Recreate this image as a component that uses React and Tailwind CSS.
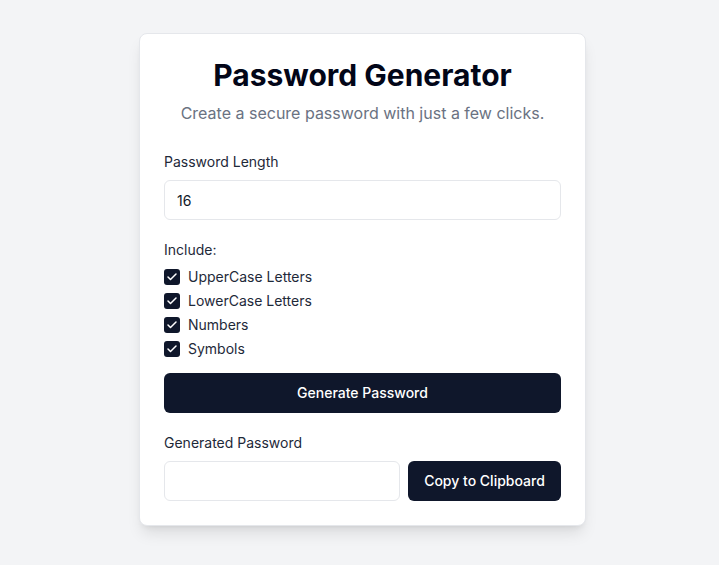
import { useState } from "react";

const opcoes = [
  { key: "upper", label: "UpperCase Letters" },
  { key: "lower", label: "LowerCase Letters" },
  { key: "numbers", label: "Numbers" },
  { key: "symbols", label: "Symbols" },
];

function Check({ checked, onChange, label }) {
  return (
    <label className="flex h-6 cursor-pointer select-none items-center gap-2 text-sm text-gray-800">
      <span
        onClick={onChange}
        className="flex h-4 w-4 items-center justify-center rounded-[3px] bg-slate-900"
      >
        {checked && (
          <svg viewBox="0 0 24 24" className="h-3 w-3" fill="none" stroke="white" strokeWidth="3" strokeLinecap="round" strokeLinejoin="round">
            <path d="M20 6 9 17l-5-5" />
          </svg>
        )}
      </span>
      {label}
    </label>
  );
}

export default function App() {
  const [tamanho, setTamanho] = useState("16");
  const [marcados, setMarcados] = useState({ upper: true, lower: true, numbers: true, symbols: true });
  const [senha, setSenha] = useState("");

  function gerar() {
    let chars = "";
    if (marcados.upper) chars += "ABCDEFGHIJKLMNOPQRSTUVWXYZ";
    if (marcados.lower) chars += "abcdefghijklmnopqrstuvwxyz";
    if (marcados.numbers) chars += "0123456789";
    if (marcados.symbols) chars += "!@#$%^&*()_+-=";
    if (!chars) return;
    let out = "";
    for (let i = 0; i < Number(tamanho); i++) out += chars[Math.floor(Math.random() * chars.length)];
    setSenha(out);
  }

  return (
    <div
      className="flex min-h-screen justify-center bg-gray-100 pl-[6px] pt-[33px]"
      style={{ fontFamily: "Inter, 'Noto Sans', sans-serif" }}
    >
      <div className="h-fit w-[447px] rounded-lg border border-gray-200 bg-white p-6 pt-[23px] shadow-lg">
        <h1 className="text-center text-3xl font-bold text-slate-950">Password Generator</h1>
        <p className="mt-2 text-center text-base text-gray-500">
          Create a secure password with just a few clicks.
        </p>

        <label className="mt-[27px] block text-sm text-gray-800">Password Length</label>
        <input
          value={tamanho}
          onChange={(e) => setTamanho(e.target.value)}
          className="mt-2 h-10 w-full rounded-md border border-gray-200 px-3 text-sm text-gray-900 outline-none"
        />

        <p className="mt-5 text-sm text-gray-800">Include:</p>
        <div className="mt-[5px] flex flex-col">
          {opcoes.map((o) => (
            <Check
              key={o.key}
              label={o.label}
              checked={marcados[o.key]}
              onChange={() => setMarcados((m) => ({ ...m, [o.key]: !m[o.key] }))}
            />
          ))}
        </div>

        <button
          onClick={gerar}
          className="mt-3 h-10 w-full rounded-md bg-slate-900 text-sm font-medium text-white"
        >
          Generate Password
        </button>

        <label className="mt-5 block text-sm text-gray-800">Generated Password</label>
        <div className="mt-2 flex gap-2">
          <input
            readOnly
            value={senha}
            className="h-10 min-w-0 flex-1 rounded-md border border-gray-200 px-3 text-sm text-gray-900 outline-none"
          />
          <button className="h-10 w-[153px] rounded-md bg-slate-900 text-sm font-medium text-white">
            Copy to Clipboard
          </button>
        </div>
      </div>
    </div>
  );
}
